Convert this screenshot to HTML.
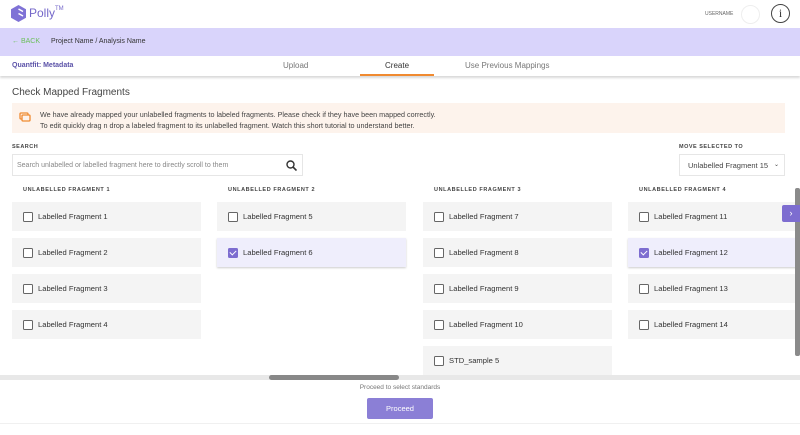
<!DOCTYPE html>
<html><head><meta charset="utf-8"><style>
*{margin:0;padding:0;box-sizing:border-box}
body{width:800px;height:435px;overflow:hidden;background:#fff;font-family:"Liberation Sans",sans-serif;position:relative;color:#333}
.a{position:absolute}
.row{position:absolute;width:189px;height:29px;background:#f4f4f4;font-size:7.6px;color:#333;display:flex;align-items:center;padding-left:11px}
.row .cb{width:10px;height:10px;border:1.3px solid #666;border-radius:1.5px;margin-right:5px;background:#fff}
.row.sel{background:#efeefc;box-shadow:0 1px 2px rgba(0,0,0,.2)}
.row.sel .cb{background:#7d6dd0;border-color:#7d6dd0;position:relative}
.row.sel .cb:after{content:"";position:absolute;left:2px;top:0px;width:3px;height:5px;border:solid #fff;border-width:0 1.3px 1.3px 0;transform:rotate(45deg)}
.hd{position:absolute;top:187px;font-size:5.5px;font-weight:bold;letter-spacing:.6px;color:#444}
</style></head><body>
<svg class="a" style="left:11px;top:5px" width="15" height="17" viewBox="0 0 15 17"><path d="M7.5 0L15 4.2V12.8L7.5 17L0 12.8V4.2Z" fill="#7f72d6"/><path d="M7.5 4L12 6.5M7.5 8.5L12 11" stroke="#fff" stroke-width="1.5"/></svg>
<div class="a" style="left:29px;top:6px;font-size:12px;color:#7467c9">Polly<span style="font-size:6px;vertical-align:top">TM</span></div>
<div class="a" style="left:705px;top:11px;font-size:5px;color:#666">USERNAME</div>
<div class="a" style="left:741px;top:5px;width:19px;height:19px;border-radius:50%;border:1px solid #eee"></div>
<div class="a" style="left:771px;top:4px;width:19px;height:19px;border-radius:50%;border:1.2px solid #444;text-align:center;font-size:12px;line-height:17px;color:#333;font-family:'Liberation Serif',serif">i</div>
<div class="a" style="left:0;top:28px;width:800px;height:28px;background:#d9d4fb"></div>
<div class="a" style="left:12px;top:38px;font-size:7px;color:#6abf5a">← BACK</div>
<div class="a" style="left:51px;top:38px;font-size:7px;color:#333">Project Name / Analysis Name</div>
<div class="a" style="left:0;top:56px;width:800px;height:20px;background:#fff;box-shadow:0 2px 2px rgba(0,0,0,.15)"></div>
<div class="a" style="left:12px;top:62px;font-size:7px;font-weight:bold;color:#5b52a8">Quantfit: Metadata</div>
<div class="a" style="left:283px;top:61px;font-size:8px;color:#777">Upload</div>
<div class="a" style="left:385px;top:61px;font-size:8px;color:#333">Create</div>
<div class="a" style="left:360px;top:74px;width:74px;height:2px;background:#f08a30"></div>
<div class="a" style="left:465px;top:61px;font-size:8px;color:#777">Use Previous Mappings</div>
<div class="a" style="left:12px;top:87px;font-size:10px;color:#444">Check Mapped Fragments</div>
<div class="a" style="left:12px;top:103px;width:773px;height:30px;background:#fdf3ec"></div>
<svg class="a" style="left:19px;top:112px" width="12" height="11" viewBox="0 0 12 11"><rect x="1" y="1" width="8" height="6" rx="1" fill="none" stroke="#f08a30" stroke-width="1.3"/><rect x="3" y="3" width="8" height="6" rx="1" fill="#fdf3ec" stroke="#f08a30" stroke-width="1.3"/></svg>
<div class="a" style="left:40px;top:109px;font-size:7.2px;line-height:11px;color:#444">We have already mapped your unlabelled fragments to labeled fragments. Please check if they have been mapped correctly.<br>To edit quickly drag n drop a labeled fragment to its unlabelled fragment. Watch this short tutorial to understand better.</div>
<div class="a" style="left:12px;top:144px;font-size:5.5px;font-weight:bold;letter-spacing:.5px;color:#444">SEARCH</div>
<div class="a" style="left:12px;top:154px;width:291px;height:22px;border:1px solid #e6e6e6;font-size:7px;color:#888;padding:7px 0 0 4px">Search unlabelled or labelled fragment here to directly scroll to them</div>
<svg class="a" style="left:286px;top:160px" width="11" height="11" viewBox="0 0 11 11"><circle cx="4.5" cy="4.5" r="3.5" fill="none" stroke="#333" stroke-width="1.4"/><path d="M7 7L10.5 10.5" stroke="#333" stroke-width="1.6"/></svg>
<div class="a" style="left:679px;top:144px;font-size:5.5px;font-weight:bold;letter-spacing:.5px;color:#444">MOVE SELECTED TO</div>
<div class="a" style="left:679px;top:154px;width:106px;height:22px;border:1px solid #e6e6e6;font-size:7.5px;color:#444;padding:6px 0 0 8px">Unlabelled Fragment 15<span style="position:absolute;right:5px;top:6px;font-size:6px">⌄</span></div>
<div class="hd" style="left:23px">UNLABELLED FRAGMENT 1</div>
<div class="hd" style="left:228px">UNLABELLED FRAGMENT 2</div>
<div class="hd" style="left:434px">UNLABELLED FRAGMENT 3</div>
<div class="hd" style="left:639px">UNLABELLED FRAGMENT 4</div>
<div class="a" style="left:0;top:200px;width:800px;height:175px;overflow:hidden">
<div class="row" style="left:12px;top:2px"><span class="cb"></span>Labelled Fragment 1</div>
<div class="row" style="left:12px;top:38px"><span class="cb"></span>Labelled Fragment 2</div>
<div class="row" style="left:12px;top:74px"><span class="cb"></span>Labelled Fragment 3</div>
<div class="row" style="left:12px;top:110px"><span class="cb"></span>Labelled Fragment 4</div>
<div class="row" style="left:217px;top:2px"><span class="cb"></span>Labelled Fragment 5</div>
<div class="row sel" style="left:217px;top:38px"><span class="cb"></span>Labelled Fragment 6</div>
<div class="row" style="left:423px;top:2px"><span class="cb"></span>Labelled Fragment 7</div>
<div class="row" style="left:423px;top:38px"><span class="cb"></span>Labelled Fragment 8</div>
<div class="row" style="left:423px;top:74px"><span class="cb"></span>Labelled Fragment 9</div>
<div class="row" style="left:423px;top:110px"><span class="cb"></span>Labelled Fragment 10</div>
<div class="row" style="left:423px;top:146px"><span class="cb"></span>STD_sample 5</div>
<div class="row" style="left:628px;top:2px"><span class="cb"></span>Labelled Fragment 11</div>
<div class="row sel" style="left:628px;top:38px"><span class="cb"></span>Labelled Fragment 12</div>
<div class="row" style="left:628px;top:74px"><span class="cb"></span>Labelled Fragment 13</div>
<div class="row" style="left:628px;top:110px"><span class="cb"></span>Labelled Fragment 14</div>
</div>
<div class="a" style="left:795px;top:188px;width:5px;height:168px;background:#8a8a8a;border-radius:2px"></div>
<div class="a" style="left:782px;top:205px;width:18px;height:17px;background:#7d6dd0;border-radius:2px 0 0 2px;color:#fff;font-size:9px;text-align:center;line-height:17px">›</div>
<div class="a" style="left:0;top:375px;width:800px;height:5px;background:#e8e8e8"></div>
<div class="a" style="left:269px;top:375px;width:130px;height:5px;background:#888;border-radius:3px"></div>
<div class="a" style="left:0;top:384px;width:800px;text-align:center;font-size:6.5px;color:#777">Proceed to select standards</div>
<div class="a" style="left:367px;top:398px;width:66px;height:21px;background:#8b7fd6;border-radius:2px;color:#fff;font-size:7.5px;text-align:center;line-height:21px">Proceed</div>
<div class="a" style="left:0;top:423px;width:800px;height:1px;background:#f0f0f0"></div>
</body></html>
